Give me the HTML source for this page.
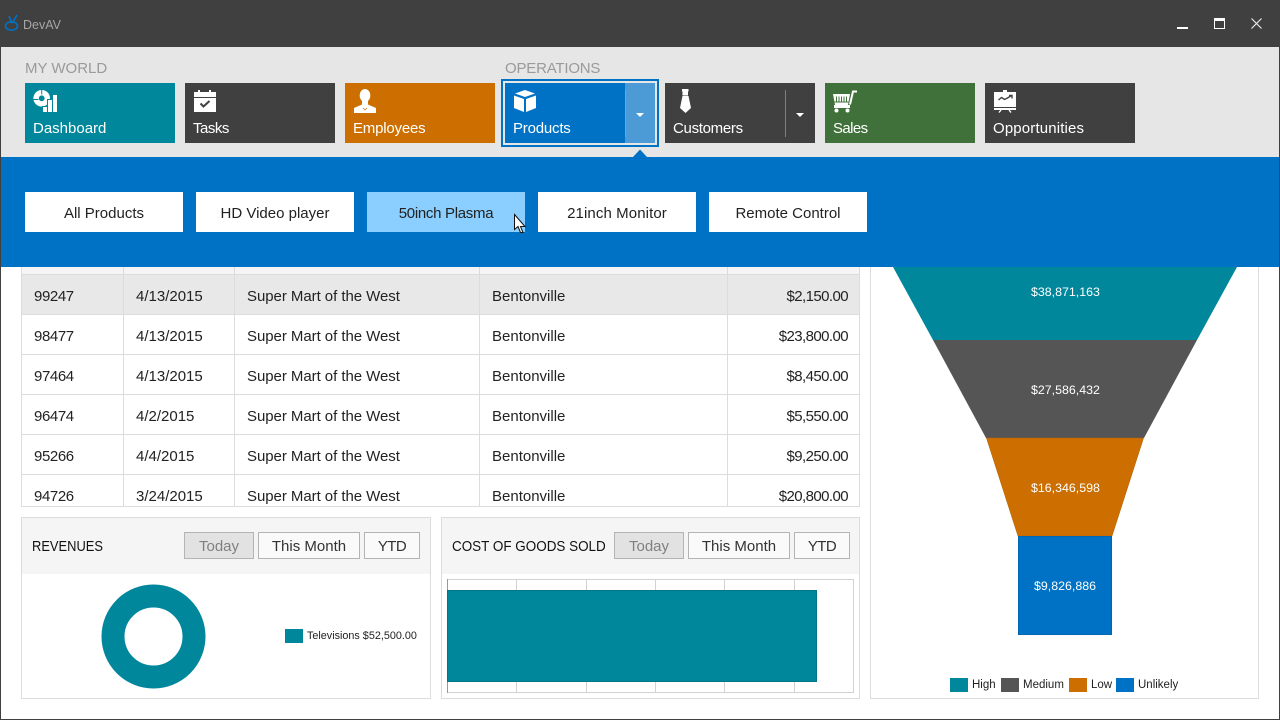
<!DOCTYPE html>
<html><head><meta charset="utf-8"><title>DevAV</title>
<style>
html,body{margin:0;padding:0;background:#fff}
#p{position:relative;width:1280px;height:720px;overflow:hidden;background:#fff;font-family:"Liberation Sans",sans-serif;font-size:15px;color:#222}
.b{position:absolute}
.t{position:absolute;white-space:nowrap;line-height:20px}
.w{color:#fff}
.r{text-align:right;letter-spacing:-.58px}
.n{letter-spacing:-.4px}
.btn{position:absolute;box-sizing:border-box;height:40px;top:192px;width:158px;background:#fff;text-align:center;line-height:43px;color:#222}
.sb{position:absolute;box-sizing:border-box;top:532px;height:27px;border:1px solid #b4b4b4;background:#fafafa;text-align:center;line-height:28px;font-size:15px;color:#333}
.sb.on{background:#e2e2e2;color:#808080}
svg{position:absolute;left:0;top:0}
</style></head><body><div id="p">
<div class="b" style="left:0;top:0;width:1280px;height:47px;background:#404040"></div>
<div class="b" style="left:0;top:47px;width:1280px;height:110px;background:#e6e6e6"></div>
<div class="b" style="left:0;top:157px;width:1280px;height:110px;background:#0072c6"></div>

<!-- table -->
<div class="b" style="left:21px;top:267px;width:839px;height:7px;background:#f5f5f5"></div>
<div class="b" style="left:21px;top:275px;width:839px;height:39px;background:#e8e8e8"></div>

<!-- bottom panels -->
<div class="b" style="left:22px;top:518px;width:408px;height:56px;background:#f5f5f5"></div>
<div class="b" style="left:442px;top:518px;width:417px;height:56px;background:#f5f5f5"></div>

<svg width="1280" height="720" viewBox="0 0 1280 720">
<!-- window border -->
<g fill="#404040"><rect x="0" y="47" width="1" height="673"/><rect x="1279" y="47" width="1" height="673"/><rect x="0" y="719" width="1280" height="1"/></g>
<!-- table lines -->
<g stroke="#dcdcdc" stroke-width="1" fill="none">
<path d="M21.5 267V506.5M123.5 267V506.5M234.5 267V506.5M479.5 267V506.5M727.5 267V506.5M859.5 267V506.5"/>
<path d="M21 274.5H860M21 314.5H860M21 354.5H860M21 394.5H860M21 434.5H860M21 474.5H860M21 506.5H860"/>
<rect x="21.5" y="517.5" width="409" height="181"/>
<rect x="441.5" y="517.5" width="418" height="181"/>
<path d="M870.5 267V698.5H1258.5V267"/>
</g>
<!-- donut -->
<circle cx="153.5" cy="636.5" r="40.5" fill="none" stroke="#00879c" stroke-width="23"/>
<rect x="285" y="629" width="18" height="14" fill="#00879c"/>
<!-- bar chart -->
<g stroke="#d2d2d2" fill="none"><rect x="447.5" y="579.5" width="406" height="113"/>
<path d="M516.5 579V693M586.5 579V693M655.5 579V693M724.5 579V693M794.5 579V693"/></g>
<path d="M447.5 579V693" stroke="#999"/>
<rect x="447.5" y="590.5" width="369" height="91" fill="#00879c" stroke="#007486"/>
<!-- funnel -->
<polygon points="893,267 1237,267 1197,340 933,340" fill="#00879c"/>
<polygon points="933,340 1197,340 1144,438 986,438" fill="#555"/>
<polygon points="986.5,438 1143.5,438 1112,536 1018,536" fill="#cd6f00" stroke="#b86400" stroke-width="0.6"/>
<rect x="1018.5" y="536.5" width="93" height="98" fill="#0072c6" stroke="#0066b2"/>
<rect x="950" y="678" width="18" height="14" fill="#00879c"/>
<rect x="1001" y="678" width="18" height="14" fill="#555"/>
<rect x="1069" y="678" width="18" height="14" fill="#cd6f00"/>
<rect x="1116" y="678" width="18" height="14" fill="#0072c6"/>

<!-- tiles -->
<rect x="25" y="83" width="150" height="60" fill="#00879c"/>
<rect x="185" y="83" width="150" height="60" fill="#404040"/>
<rect x="345" y="83" width="150" height="60" fill="#cd6f00"/>
<rect x="502" y="80" width="156" height="66" fill="#e6e6e6" stroke="#0072c6" stroke-width="2"/>
<rect x="505" y="83" width="150" height="60" fill="#0072c6"/>
<rect x="625" y="83" width="30" height="60" fill="#4c9bd7"/>
<rect x="625" y="90" width="1" height="47" fill="#66a9dd"/>
<rect x="665" y="83" width="150" height="60" fill="#404040"/>
<rect x="785" y="90" width="1" height="47" fill="#808080"/>
<rect x="825" y="83" width="150" height="60" fill="#41713a"/>
<rect x="985" y="83" width="150" height="60" fill="#404040"/>
<polygon points="636,113 644,113 640,117" fill="#fff"/>
<polygon points="796,113 804,113 800,117" fill="#fff"/>
<polygon points="633,157 647,157 640,149.5" fill="#0072c6"/>

<!-- logo -->
<g fill="none" stroke="#0072c6" stroke-width="1.6"><ellipse cx="11.5" cy="26" rx="6" ry="4.2"/><path d="M9 16L12 23M17 15L12.5 23"/></g>
<!-- window controls -->
<rect x="1177" y="27" width="11" height="2" fill="#fff"/>
<rect x="1214.5" y="18.5" width="10" height="10" fill="none" stroke="#fff"/><rect x="1214" y="18" width="11" height="3" fill="#fff"/>
<path d="M1251.5 18.5L1261.5 28.5M1261.5 18.5L1251.5 28.5" stroke="#e8e8e8" stroke-width="1.2" fill="none"/>

<!-- dashboard icon -->
<circle cx="41.7" cy="98.3" r="5.6" fill="none" stroke="#fff" stroke-width="5.4"/>
<path d="M41.7 89.500v5M33 99.500h5.500" stroke="#00879c" stroke-width="1"/>
<rect x="47" y="99" width="6" height="14" fill="#00879c"/><rect x="42" y="106" width="6" height="7" fill="#00879c"/>
<rect x="43" y="107" width="4" height="5" fill="#fff"/><rect x="48" y="100" width="4" height="12" fill="#fff"/><rect x="53" y="95" width="4" height="17" fill="#fff"/>
<!-- tasks icon -->
<path d="M194 92h4v-2h2v2h9v-2h2v2h5v5h-22z" fill="#fff"/>
<rect x="194" y="98" width="22" height="14" fill="#fff"/>
<path d="M200.500 103.500l3 3 6-5.500" fill="none" stroke="#404040" stroke-width="2"/>
<!-- employees icon -->
<ellipse cx="365" cy="95.500" rx="5.300" ry="6.500" fill="#fff"/>
<path d="M362 100h6v4.500l8 3.500v5h-22v-5l8-3.500z" fill="#fff"/>
<path d="M363 108l2 2 2-2" fill="none" stroke="#cd6f00" stroke-width=".7"/>
<!-- products icon -->
<path d="M525 90l10 3.500-10 3.500-10-3.500z" fill="#fff"/>
<path d="M514 95.500l10 3.500v13l-10-4zM536 95.500l-10 3.500v13l10-4z" fill="#fff"/>
<!-- customers icon -->
<path d="M682 89h6.500v2l-.5 1v3.500h-5.500V92l-.5-1z" fill="#fff"/>
<path d="M682.500 96h6l2.500 12-5.500 5-5.500-5z" fill="#fff"/>
<!-- cart icon -->
<path d="M833 94h17l-2 11h-13z" fill="#fff"/>
<path d="M850 104.500l3-13h4" fill="none" stroke="#fff" stroke-width="2"/>
<path d="M836.500 96.500v5M839 96.500v5M841.500 96.500v5M844 96.500v5M846.500 96.500v5" stroke="#41713a" stroke-width="1"/>
<rect x="834" y="105" width="16" height="3" fill="#fff"/><rect x="834.500" y="101.500" width="14" height="1" fill="#41713a"/>
<circle cx="836.500" cy="110.500" r="2" fill="#fff"/><circle cx="847.500" cy="110.500" r="2" fill="#fff"/>
<!-- opportunities icon -->
<rect x="1003" y="90" width="4" height="2" fill="#fff"/>
<rect x="994" y="92" width="22" height="15" fill="#fff"/>
<rect x="994" y="108" width="22" height="2" fill="#fff"/>
<path d="M999 112.500l2-2.500M1011 112.500l-2-2.500" stroke="#fff" stroke-width="1.400" fill="none"/>
<path d="M998.500 100l3-2.500 3 2 3-1.500 4-2.500M1009 95.500h3v3" fill="none" stroke="#404040" stroke-width="1.400"/>
</svg>

<div class="t" style="left:23px;top:15px;font-size:12.5px;color:#a6a6a6">DevAV</div>
<div class="t" style="left:25px;top:59px;color:#9a9a9a">MY WORLD</div>
<div class="t" style="left:505px;top:59px;color:#9a9a9a;letter-spacing:-.2px">OPERATIONS</div>
<div class="t w" style="left:33px;top:119px">Dashboard</div>
<div class="t w" style="left:193px;top:119px;letter-spacing:-.5px">Tasks</div>
<div class="t w" style="left:353px;top:119px;letter-spacing:-.2px">Employees</div>
<div class="t w" style="left:513px;top:119px;letter-spacing:-.2px">Products</div>
<div class="t w" style="left:673px;top:119px;letter-spacing:-.3px">Customers</div>
<div class="t w" style="left:833px;top:119px;letter-spacing:-.6px">Sales</div>
<div class="t w" style="left:993px;top:119px;letter-spacing:.15px">Opportunities</div>

<div class="btn" style="left:25px">All Products</div>
<div class="btn" style="left:196px">HD Video player</div>
<div class="btn" style="left:367px;background:#8acfff;letter-spacing:-.3px">50inch Plasma</div>
<div class="btn" style="left:538px;letter-spacing:.1px">21inch Monitor</div>
<div class="btn" style="left:709px">Remote Control</div>

<svg width="1280" height="720" viewBox="0 0 1280 720" style="z-index:3"><path d="M514.500 214.500v15l3.500-3 2.500 6h2.500l-2.500-6h4.500z" fill="#fff" stroke="#111" stroke-width="1"/></svg>

<div class="t n" style="left:34px;top:287px">99247</div><div class="t" style="left:136px;top:287px">4/13/2015</div><div class="t" style="left:247px;top:287px;letter-spacing:-.05px">Super Mart of the West</div><div class="t" style="left:492px;top:287px">Bentonville</div><div class="t r" style="right:432px;top:287px">$2,150.00</div>
<div class="t n" style="left:34px;top:327px">98477</div><div class="t" style="left:136px;top:327px">4/13/2015</div><div class="t" style="left:247px;top:327px;letter-spacing:-.05px">Super Mart of the West</div><div class="t" style="left:492px;top:327px">Bentonville</div><div class="t r" style="right:432px;top:327px">$23,800.00</div>
<div class="t n" style="left:34px;top:367px">97464</div><div class="t" style="left:136px;top:367px">4/13/2015</div><div class="t" style="left:247px;top:367px;letter-spacing:-.05px">Super Mart of the West</div><div class="t" style="left:492px;top:367px">Bentonville</div><div class="t r" style="right:432px;top:367px">$8,450.00</div>
<div class="t n" style="left:34px;top:407px">96474</div><div class="t" style="left:136px;top:407px">4/2/2015</div><div class="t" style="left:247px;top:407px;letter-spacing:-.05px">Super Mart of the West</div><div class="t" style="left:492px;top:407px">Bentonville</div><div class="t r" style="right:432px;top:407px">$5,550.00</div>
<div class="t n" style="left:34px;top:447px">95266</div><div class="t" style="left:136px;top:447px">4/4/2015</div><div class="t" style="left:247px;top:447px;letter-spacing:-.05px">Super Mart of the West</div><div class="t" style="left:492px;top:447px">Bentonville</div><div class="t r" style="right:432px;top:447px">$9,250.00</div>
<div class="t n" style="left:34px;top:487px;height:19px;overflow:hidden">94726</div><div class="t" style="left:136px;top:487px;height:19px;overflow:hidden">3/24/2015</div><div class="t" style="left:247px;top:487px;height:19px;overflow:hidden;letter-spacing:-.05px">Super Mart of the West</div><div class="t" style="left:492px;top:487px;height:19px;overflow:hidden">Bentonville</div><div class="t r" style="right:432px;top:487px;height:19px;overflow:hidden">$20,800.00</div>

<div class="t" style="left:32px;top:537px;font-size:15px;transform:scaleX(.86);transform-origin:0 0;color:#111">REVENUES</div>
<div class="sb on" style="left:184px;width:70px">Today</div>
<div class="sb" style="left:258px;width:102px">This Month</div>
<div class="sb" style="left:364px;width:56px;letter-spacing:-.6px">YTD</div>
<div class="t" style="left:307px;top:626px;font-size:10.8px">Televisions $52,500.00</div>

<div class="t" style="left:452px;top:537px;font-size:15px;transform:scaleX(.897);transform-origin:0 0;color:#111">COST OF GOODS SOLD</div>
<div class="sb on" style="left:614px;width:70px">Today</div>
<div class="sb" style="left:688px;width:102px">This Month</div>
<div class="sb" style="left:794px;width:56px;letter-spacing:-.6px">YTD</div>

<div class="t w" style="left:1031px;top:282px;font-size:12.4px">$38,871,163</div>
<div class="t w" style="left:1031px;top:380px;font-size:12.4px">$27,586,432</div>
<div class="t w" style="left:1031px;top:478px;font-size:12.4px">$16,346,598</div>
<div class="t w" style="left:1034px;top:576px;font-size:12.4px">$9,826,886</div>

<div class="t" style="left:972px;top:675px;font-size:11.5px">High</div>
<div class="t" style="left:1023px;top:675px;font-size:11.5px">Medium</div>
<div class="t" style="left:1091px;top:675px;font-size:11.5px">Low</div>
<div class="t" style="left:1138px;top:675px;font-size:11.5px">Unlikely</div>
</div></body></html>
